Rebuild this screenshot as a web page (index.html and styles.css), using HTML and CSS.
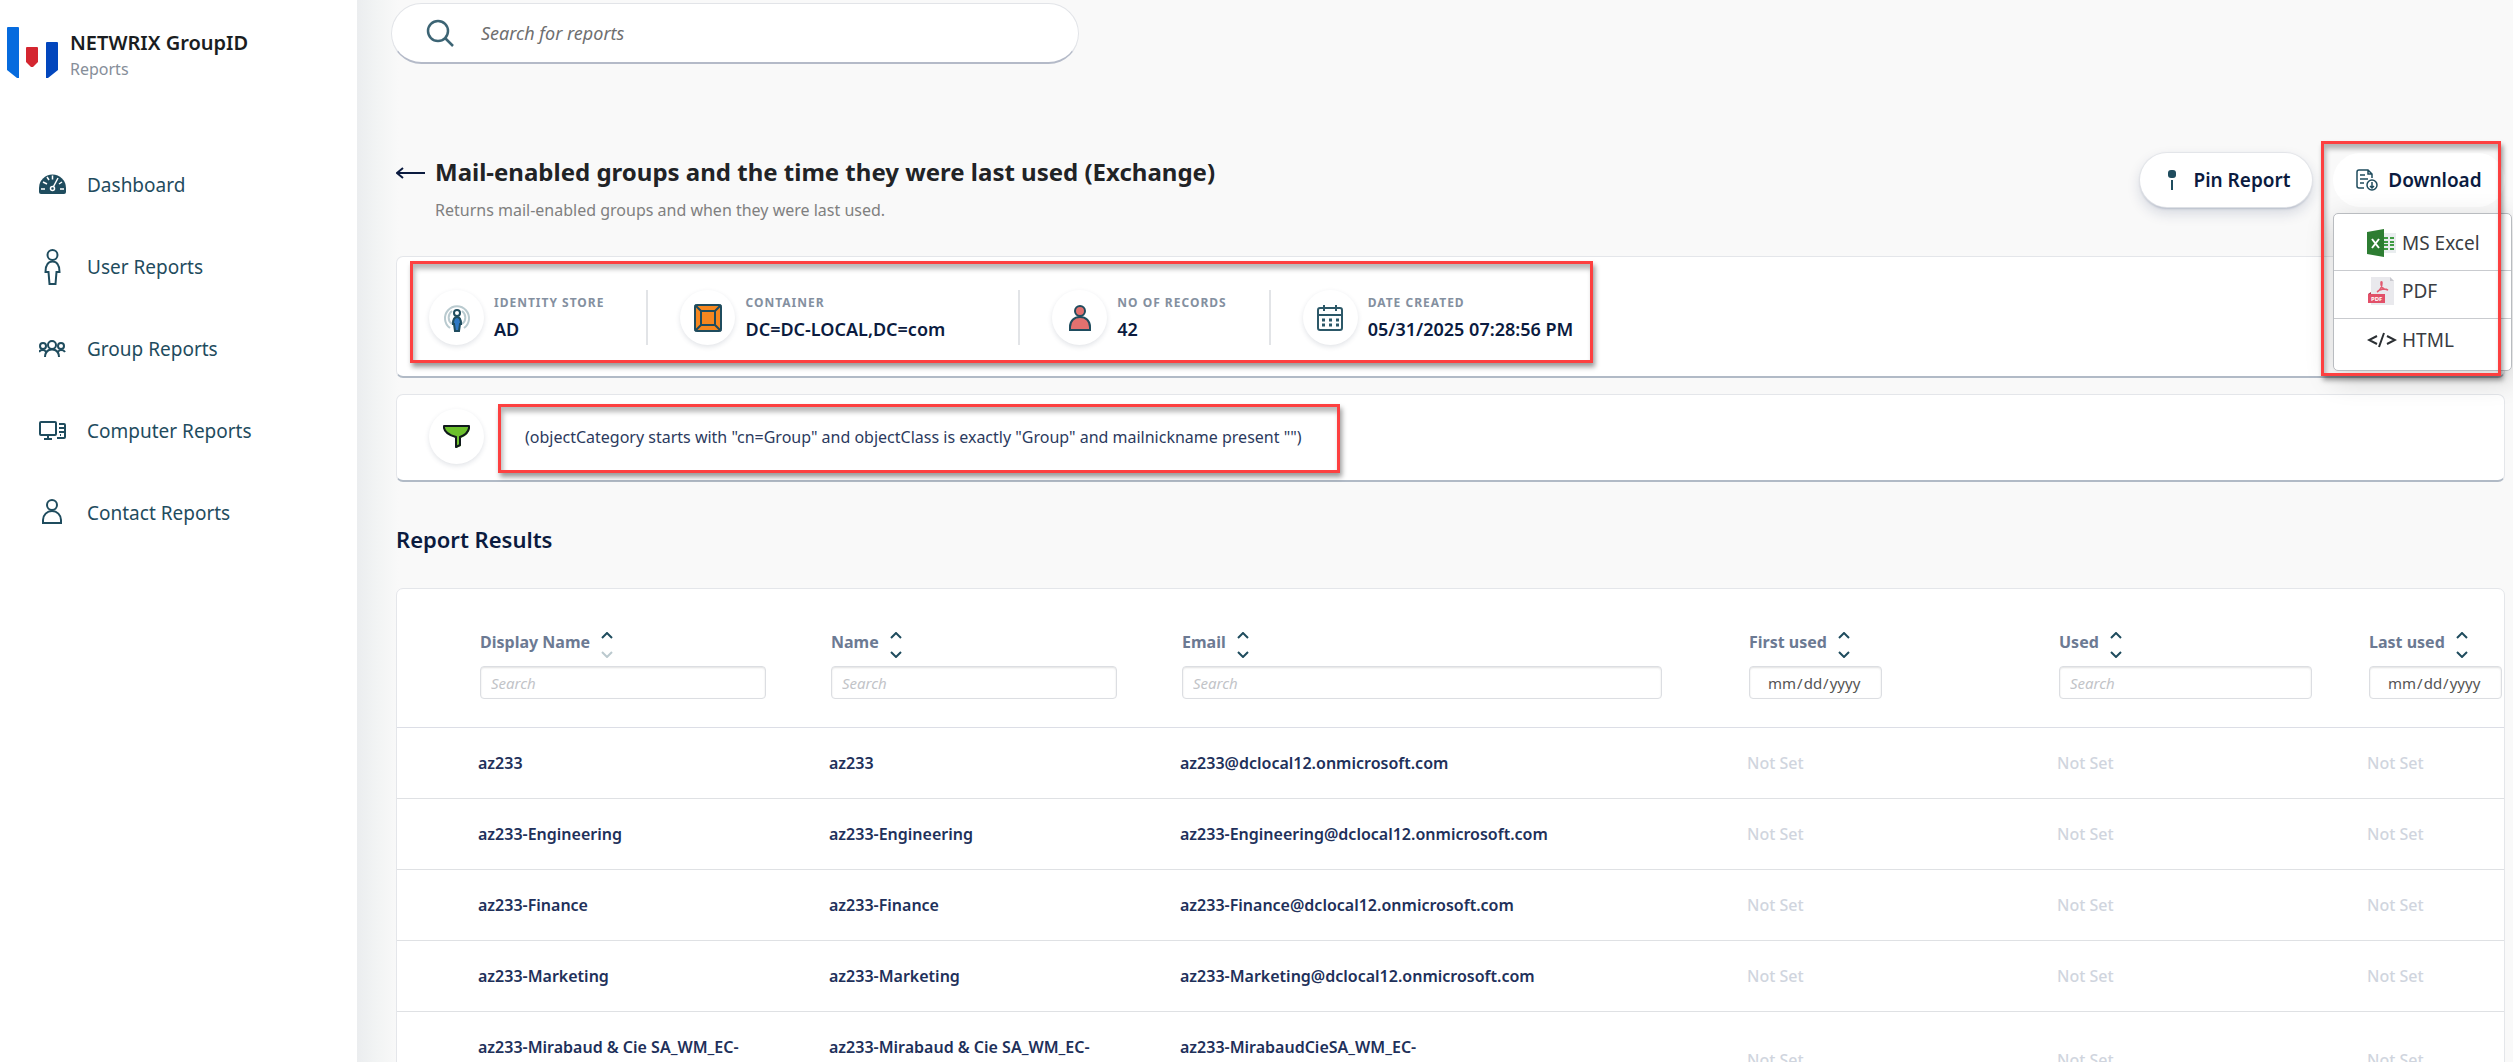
FILE: index.html
```html
<!DOCTYPE html>
<html lang="en">
<head>
    <meta charset="UTF-8">
    <meta name="viewport" content="width=device-width, initial-scale=1.0">
    <title>NETWRIX GroupID Reports</title>
    <link rel="stylesheet" href="styles.css">
</head>
<body>
    <!-- Sidebar -->
    <aside class="sidebar">
        <div class="brand">
            <svg class="brand-logo" width="52" height="52" viewBox="0 0 52 52">
                <path fill="#066bde" d="M1 0h10q1 0 1 1v50h-2L0 43V1q0-1 1-1z"/>
                <path fill="#d42630" d="M20 20h10q1 0 1 1v14l-5 5h-2l-5-5V21q0-1 1-1z"/>
                <path fill="#0246bd" d="M40 15h10q1 0 1 1v27l-10 8h-2V16q0-1 1-1z"/>
            </svg>
            <div>
                <div class="brand-name">NETWRIX GroupID</div>
                <div class="brand-sub">Reports</div>
            </div>
        </div>
        <nav class="menu">
            <a href="#">
                <svg width="28" height="36" viewBox="0 0 28 36">
                    <path fill="#1f4c5e" d="M0 25v-4a13.5 13.5 0 0 1 27 0v4q0 2-2 2H2q-2 0-2-2z"/>
                    <g stroke="#fff" stroke-width="1.5" fill="none">
                        <path d="M2 22h4M21 22h4M4 15l4 2M8 10l2 3M13.500 8.500v4M23 15l-3 2M19 11l-4.500 8.500"/>
                        <circle cx="13.500" cy="21.500" r="2"/>
                    </g>
                </svg>
                Dashboard
            </a>
            <a href="#">
                <svg width="28" height="36" viewBox="0 0 28 36" class="line">
                    <circle cx="13.500" cy="6" r="5"/>
                    <path d="M13.500 12.500c-5 0-7 4-7 10.500h3l1 12h6l1-12h3c0-6.500-2-10.500-7-10.500z"/>
                </svg>
                User Reports
            </a>
            <a href="#">
                <svg width="28" height="36" viewBox="0 0 28 36" class="line">
                    <circle cx="13" cy="14" r="4"/>
                    <path d="M6 26c0-4 2-6 4-7q3-1 6 0c2 1 4 3 4 7"/>
                    <ellipse cx="4" cy="15" rx="3" ry="3"/>
                    <ellipse cx="22" cy="15" rx="3" ry="3"/>
                    <path d="M0 21q1-2 4-2 2 0 3 2M26 21q-1-2-4-2-2 0-3 2"/>
                </svg>
                Group Reports
            </a>
            <a href="#">
                <svg width="28" height="36" viewBox="0 0 28 36" class="line">
                    <rect x="1" y="9" width="16" height="13" rx="1"/>
                    <path d="M9 22v3M5 26h8M20 11h5q1 0 1 1v12q0 1-1 1h-7M20 15h6M20 19h6"/>
                    <path d="M21 22h1"/>
                </svg>
                Computer Reports
            </a>
            <a href="#">
                <svg width="28" height="36" viewBox="0 0 28 36" class="line">
                    <circle cx="13" cy="10" r="5"/>
                    <path d="M4 28v-3c0-5 4-9 9-9s9 4 9 9v3z"/>
                </svg>
                Contact Reports
            </a>
        </nav>
    </aside>

    <!-- Main content area -->
    <main class="main-content">
        <label class="search-bar">
            <svg width="28" height="28" viewBox="0 0 28 28" fill="none" stroke="#3c6474" stroke-width="2.500">
                <circle cx="12" cy="12" r="10"/>
                <path d="M19 19l8 8"/>
            </svg>
            <input type="search" placeholder="Search for reports" aria-label="Search for reports">
        </label>

        <div class="page">
            <header class="report-header">
                <a class="back" href="#" aria-label="Back">
                    <svg width="30" height="12" viewBox="0 0 30 12" fill="none" stroke="#0b1b3f" stroke-width="2">
                        <path d="M29 6H1M7 1L1 6l6 5"/>
                    </svg>
                </a>
                <div class="report-title">
                    <h1>Mail-enabled groups and the time they were last used (Exchange)</h1>
                    <p>Returns mail-enabled groups and when they were last used.</p>
                </div>
                <button class="pill-button raised">
                    <svg width="22" height="22" viewBox="0 0 22 22">
                        <rect x="7" y="1" width="8" height="8" rx="3" fill="#1f4c5e"/>
                        <path d="M11 11v10" stroke="#1f4c5e" stroke-width="2"/>
                    </svg>
                    Pin Report
                </button>
                <div class="download">
                    <button class="pill-button">
                        <svg width="22" height="22" viewBox="0 0 22 22" fill="none" stroke="#1f4c5e" stroke-width="1.5">
                            <path d="M8 19H3q-2 0-2-2V3q0-2 2-2h9l4 4v4M12 1v4h4M4 6h5M4 10h8M4 14h4"/>
                            <circle cx="16" cy="16" r="5"/>
                            <path d="M16 13v6M14 17l2 2 2-2"/>
                        </svg>
                        Download
                    </button>
                    <div class="download-menu">
                        <button>
                            <svg width="30" height="28" viewBox="0 0 30 28">
                                <path fill="#e9edef" d="M16 4h13v20H16z"/>
                                <path stroke="#3f9c43" stroke-width="2" stroke-dasharray="4 2" d="M17 9h10M17 13h10M17 16h10M17 20h10"/>
                                <path fill="#2d7d32" d="M0 3l17-3v28L0 25z"/>
                                <path stroke="#fff" stroke-width="2" d="M5 10l7 9M12 10l-7 9"/>
                            </svg>
                            MS Excel
                        </button>
                        <button>
                            <svg width="30" height="28" viewBox="0 0 30 28">
                                <path fill="#e9e9ed" d="M4 0h19l4 4v24H4z"/>
                                <path fill="#c9c9cf" d="M23 0l4 4h-4z"/>
                                <path fill="none" stroke="#e25a70" stroke-width="1.5" d="M10 15q5-3 5-9 0-2-1-1-1 7 7 8-3-2-8 0"/>
                                <path fill="#e25069" d="M1 17h17v9H1z"/>
                                <path fill="#b53550" d="M1 17l3-2v2z"/>
                                <text class="pdf-tag" x="4" y="24">PDF</text>
                            </svg>
                            PDF
                        </button>
                        <button>
                            <svg width="30" height="28" viewBox="0 0 30 28" fill="none" stroke="#2b2f33" stroke-width="2">
                                <path d="M10 10l-8 4 8 4M20 10l8 4-8 4M17 7l-5 14"/>
                            </svg>
                            HTML
                        </button>
                    </div>
                    <span class="callout download-callout"></span>
                </div>
            </header>

            <section class="card facts-card">
                <div class="callout facts">
                    <div class="fact">
                        <span class="fact-icon">
                            <svg width="28" height="28" viewBox="0 0 28 28" fill="none">
                                <path stroke="#b9cacf" stroke-width="2" d="M7 24a12 12 0 1 1 14 0M9 20a8 8 0 0 1 0-13M19 20a8 8 0 0 0 0-13"/>
                                <path fill="#2f78c4" stroke="#1f4c5e" stroke-width="2" d="M14 13c-3 0-4 2-4 7h1l1 7h4l1-7h1c0-5-1-7-4-7z"/>
                                <circle cx="14" cy="9" r="3" fill="#fff" stroke="#1f4c5e" stroke-width="2"/>
                            </svg>
                        </span>
                        <div>
                            <div class="fact-label">IDENTITY STORE</div>
                            <div class="fact-value">AD</div>
                        </div>
                    </div>
                    <div class="fact fact-wide">
                        <span class="fact-icon">
                            <svg width="28" height="28" viewBox="0 0 28 28" fill="#f7871f" stroke="#1f4c5e" stroke-width="2">
                                <rect x="1" y="1" width="26" height="26" rx="2"/>
                                <path d="M1 1l6 6M27 1l-6 6M1 27l6-6M27 27l-6-6"/>
                                <rect x="7" y="7" width="14" height="14"/>
                            </svg>
                        </span>
                        <div>
                            <div class="fact-label">CONTAINER</div>
                            <div class="fact-value">DC=DC-LOCAL,DC=com</div>
                        </div>
                    </div>
                    <div class="fact">
                        <span class="fact-icon">
                            <svg width="28" height="28" viewBox="0 0 28 28" fill="#e2716f" stroke="#1f4c5e" stroke-width="2">
                                <path d="M4 26v-3c0-6 4-10 10-10s10 4 10 10v3z"/>
                                <circle cx="14" cy="7" r="5"/>
                            </svg>
                        </span>
                        <div>
                            <div class="fact-label">NO OF RECORDS</div>
                            <div class="fact-value">42</div>
                        </div>
                    </div>
                    <div class="fact">
                        <span class="fact-icon">
                            <svg width="28" height="28" viewBox="0 0 28 28" fill="none" stroke="#2c5868" stroke-width="2">
                                <rect x="2" y="4" width="24" height="22" rx="2"/>
                                <path d="M2 11h24M8 1v6M20 1v6"/>
                                <path stroke-width="3" stroke-dasharray="3 4" d="M6 16h18M6 21h18"/>
                            </svg>
                        </span>
                        <div>
                            <div class="fact-label">DATE CREATED</div>
                            <div class="fact-value">05/31/2025 07:28:56 PM</div>
                        </div>
                    </div>
                </div>
            </section>

            <section class="card filter-card">
                <span class="fact-icon">
                    <svg width="28" height="24" viewBox="0 0 28 24">
                        <path fill="#6cc02c" d="M3 3h24q-1 7-9 10v8l-5 2V14z"/>
                        <path fill="#6cc02c" stroke="#10181c" stroke-width="2" stroke-linejoin="round" d="M1 1h25v2q-1 6-9 9v8l-4 2V12Q2 9 1 3z"/>
                    </svg>
                </span>
                <div class="callout filter-text">(objectCategory starts with "cn=Group" and objectClass is exactly "Group" and mailnickname present "")</div>
            </section>

            <h2>Report Results</h2>

            <div class="table-card">
                <table>
                    <colgroup>
                        <col class="col-spacer">
                        <col class="col-name">
                        <col class="col-name">
                        <col class="col-email">
                        <col class="col-date">
                        <col class="col-date">
                        <col class="col-last">
                    </colgroup>
                    <thead>
                        <tr>
                            <td></td>
                            <th>
                                <button class="sort sorted">Display Name <svg width="12" height="26" viewBox="0 0 12 26"><path d="M1 6l5-5 5 5"/><path d="M1 20l5 5 5-5"/></svg></button>
                                <input type="text" placeholder="Search" aria-label="Display Name">
                            </th>
                            <th>
                                <button class="sort">Name <svg width="12" height="26" viewBox="0 0 12 26"><path d="M1 6l5-5 5 5"/><path d="M1 20l5 5 5-5"/></svg></button>
                                <input type="text" placeholder="Search" aria-label="Name">
                            </th>
                            <th>
                                <button class="sort">Email <svg width="12" height="26" viewBox="0 0 12 26"><path d="M1 6l5-5 5 5"/><path d="M1 20l5 5 5-5"/></svg></button>
                                <input type="text" class="wide" placeholder="Search" aria-label="Email">
                            </th>
                            <th>
                                <button class="sort">First used <svg width="12" height="26" viewBox="0 0 12 26"><path d="M1 6l5-5 5 5"/><path d="M1 20l5 5 5-5"/></svg></button>
                                <input type="date" aria-label="First used">
                            </th>
                            <th>
                                <button class="sort">Used <svg width="12" height="26" viewBox="0 0 12 26"><path d="M1 6l5-5 5 5"/><path d="M1 20l5 5 5-5"/></svg></button>
                                <input type="text" placeholder="Search" aria-label="Used">
                            </th>
                            <th>
                                <button class="sort">Last used <svg width="12" height="26" viewBox="0 0 12 26"><path d="M1 6l5-5 5 5"/><path d="M1 20l5 5 5-5"/></svg></button>
                                <input type="date" aria-label="Last used">
                            </th>
                        </tr>
                    </thead>
                    <tbody>
                        <tr>
                            <td></td>
                            <td>az233</td>
                            <td>az233</td>
                            <td>az233@dclocal12.onmicrosoft.com</td>
                            <td class="unset">Not Set</td>
                            <td class="unset">Not Set</td>
                            <td class="unset">Not Set</td>
                        </tr>
                        <tr>
                            <td></td>
                            <td>az233-Engineering</td>
                            <td>az233-Engineering</td>
                            <td>az233-Engineering@dclocal12.onmicrosoft.com</td>
                            <td class="unset">Not Set</td>
                            <td class="unset">Not Set</td>
                            <td class="unset">Not Set</td>
                        </tr>
                        <tr>
                            <td></td>
                            <td>az233-Finance</td>
                            <td>az233-Finance</td>
                            <td>az233-Finance@dclocal12.onmicrosoft.com</td>
                            <td class="unset">Not Set</td>
                            <td class="unset">Not Set</td>
                            <td class="unset">Not Set</td>
                        </tr>
                        <tr>
                            <td></td>
                            <td>az233-Marketing</td>
                            <td>az233-Marketing</td>
                            <td>az233-Marketing@dclocal12.onmicrosoft.com</td>
                            <td class="unset">Not Set</td>
                            <td class="unset">Not Set</td>
                            <td class="unset">Not Set</td>
                        </tr>
                        <tr>
                            <td></td>
                            <td>az233-Mirabaud &amp; Cie SA_WM_EC-<br>&nbsp;</td>
                            <td>az233-Mirabaud &amp; Cie SA_WM_EC-<br>&nbsp;</td>
                            <td>az233-MirabaudCieSA_WM_EC-<br>&nbsp;</td>
                            <td class="unset">Not Set</td>
                            <td class="unset">Not Set</td>
                            <td class="unset">Not Set</td>
                        </tr>
                    </tbody>
                </table>
            </div>
        </div>
    </main>
</body>
</html>
```

FILE: styles.css
```css
* {
    box-sizing: border-box;
}
body {
    margin: 0;
    font-family: "Noto Sans", "Open Sans", sans-serif;
    font-size: 16px;
    display: flex;
    height: 100vh;
    overflow: hidden;
    background-color: #f9f9f9;
}
button, input {
    font-family: inherit;
}
button {
    border: none;
    background: none;
    cursor: pointer;
}

/* Sidebar styling */
.sidebar {
    width: 357px;
    flex-shrink: 0;
    background-color: white;
}
.brand {
    display: flex;
    gap: 11px;
    padding: 27px 7px 0;
}
.brand-name {
    font-size: 20px;
    line-height: 32px;
    font-weight: 600;
    color: #1a1d21;
}
.brand-sub {
    line-height: 20px;
    color: #868e99;
}
.menu {
    display: flex;
    flex-direction: column;
    gap: 46px;
    padding: 88px 39px 0;
}
.menu a {
    display: flex;
    align-items: center;
    gap: 20px;
    height: 36px;
    font-size: 19px;
    color: #1f4c5e;
    text-decoration: none;
}
.line {
    fill: none;
    stroke: #1f4c5e;
    stroke-width: 2;
}

/* Main content area */
.main-content {
    flex: 1;
    min-width: 0;
    padding: 3px 8px 0 34px;
    background: linear-gradient(to right, #ebedef, #f2f4f4 20px, #f9f9f9 42px);
}
.search-bar {
    display: flex;
    align-items: center;
    gap: 27px;
    width: 688px;
    height: 61px;
    padding: 0 34px;
    border: 1px solid #e2e4e8;
    border-bottom: 2px solid #b4bac8;
    border-radius: 31px;
    background-color: white;
}
.search-bar input {
    flex: 1;
    padding: 0;
    border: none;
    outline: none;
    font-size: 18px;
}
.search-bar input::placeholder {
    font-style: italic;
    color: #6f6f6f;
}
.page {
    padding: 89px 0 0 5px;
}

/* Report title and actions */
.report-header {
    display: flex;
    align-items: flex-start;
    margin-bottom: 34px;
}
.back {
    display: flex;
    align-items: center;
    width: 39px;
    height: 40px;
}
.report-title {
    flex: 1;
}
h1 {
    margin: 0 0 7px;
    font-size: 24px;
    line-height: 38px;
    font-weight: 700;
    color: #212326;
}
.report-title p {
    margin: 0;
    line-height: 24px;
    color: #808080;
}
.pill-button {
    display: flex;
    align-items: center;
    justify-content: center;
    gap: 10px;
    width: 172px;
    height: 54px;
    padding: 0;
    border-radius: 27px;
    background-color: white;
    font-size: 19px;
    font-weight: 600;
    color: #0b1b3f;
}
.raised {
    box-shadow: 0 0 1px 1px #e2e4e8, 0 2px 2px #b4bac8, 0 6px 14px rgba(20, 35, 90, 0.16);
}
.download {
    position: relative;
    margin-left: 21px;
}
.download-menu {
    position: absolute;
    top: 60px;
    left: 0;
    width: 179px;
    padding: 9px 0 3px;
    border: 1px solid #b9bcc0;
    border-radius: 5px;
    background-color: white;
    box-shadow: 0 8px 28px rgba(0, 0, 0, 0.18);
}
.download-menu button {
    display: flex;
    align-items: center;
    gap: 5px;
    width: 100%;
    height: 48px;
    padding: 0 0 7px 33px;
    border-bottom: 1px solid #c9cbcf;
    font-size: 19px;
    color: #3a3d42;
}
.download-menu button:last-child {
    border-bottom: none;
}
.pdf-tag {
    font-size: 6px;
    font-weight: 700;
    fill: white;
}

/* Red callout frames */
.callout {
    border: 3px solid #fd4040;
    box-shadow: 2px 4px 5px rgba(0, 0, 0, 0.4), inset 2px 5px 5px rgba(0, 0, 0, 0.28);
}
.download-callout {
    position: absolute;
    top: -12px;
    left: -12px;
    width: 180px;
    height: 235px;
    pointer-events: none;
}

/* Report details */
.card {
    display: flex;
    margin-bottom: 16px;
    border: 1px solid #e4e6ea;
    border-bottom: 2px solid #b1bac6;
    border-radius: 7px;
    background-color: white;
}
.facts-card {
    padding: 4px 13px 13px;
}
.facts {
    display: flex;
    padding: 26px 17px 15px 16px;
}
.fact {
    display: flex;
    gap: 10px;
    padding-right: 42px;
    margin-right: 32px;
    border-right: 2px solid #e2e4e7;
}
.fact-wide {
    padding-right: 73px;
}
.fact:last-child {
    padding-right: 0;
    margin-right: 0;
    border-right: none;
}
.fact-icon {
    display: flex;
    align-items: center;
    justify-content: center;
    flex-shrink: 0;
    width: 55px;
    height: 55px;
    border-radius: 50%;
    background-color: white;
    box-shadow: 0 2px 5px rgba(30, 50, 80, 0.13);
}
.fact-label {
    margin-top: 4px;
    font-size: 12px;
    line-height: 18px;
    font-weight: 700;
    letter-spacing: 1px;
    color: #8490a0;
}
.fact-value {
    margin-top: 5px;
    font-size: 18px;
    line-height: 24px;
    font-weight: 600;
    color: #0b1b3f;
}
.filter-card {
    padding: 9px 13px 7px 32px;
    gap: 14px;
}
.filter-card .fact-icon {
    margin-top: 5px;
}
.filter-text {
    height: 69px;
    padding: 18px 35px 0 24px;
    font-size: 16px;
    line-height: 24px;
    color: #2b3a5e;
}

/* Results table */
h2 {
    margin: 39px 0 31px;
    font-size: 22px;
    line-height: 36px;
    font-weight: 600;
    color: #0b1b3f;
}
.table-card {
    border: 1px solid #e4e6ea;
    border-radius: 7px 7px 0 0;
    background-color: white;
}
table {
    width: 100%;
    table-layout: fixed;
    border-collapse: collapse;
}
.col-spacer {
    width: 81px;
}
.col-name {
    width: 351px;
}
.col-email {
    width: 567px;
}
.col-date {
    width: 310px;
}
.col-last {
    width: 137px;
}
th {
    padding: 37px 0 28px 2px;
    text-align: left;
    vertical-align: top;
    border-bottom: 1px solid #dcdee6;
}
thead td {
    border-bottom: 1px solid #dcdee6;
}
.sort {
    display: flex;
    align-items: center;
    gap: 11px;
    height: 32px;
    margin-bottom: 8px;
    padding: 0;
    font-size: 16px;
    font-weight: 700;
    color: #6c7a93;
}
.sort svg {
    margin-top: 6px;
    fill: none;
    stroke: #1f4c5e;
    stroke-width: 2;
}
.sorted path:last-child {
    opacity: 0.3;
}
th input {
    width: 82%;
    height: 33px;
    padding: 0 10px;
    border: 1px solid #dcdee2;
    border-radius: 4px;
    background-color: white;
    box-shadow: inset 0 1px 2px rgba(0, 0, 0, 0.12);
    font-size: 15px;
}
th .wide {
    width: 85%;
}
th input::placeholder {
    font-style: italic;
    color: #c2c4c8;
}
th input[type="date"] {
    width: 133px;
    padding: 0 17px;
    color: #555;
}
th input[type="date"]::-webkit-calendar-picker-indicator {
    display: none;
}
tbody td {
    padding: 22px 0;
    line-height: 26px;
    font-weight: 600;
    color: #21305a;
    border-bottom: 1px solid #dfe1e4;
}
tbody .unset {
    font-weight: 500;
    color: #d0d5de;
}
```
